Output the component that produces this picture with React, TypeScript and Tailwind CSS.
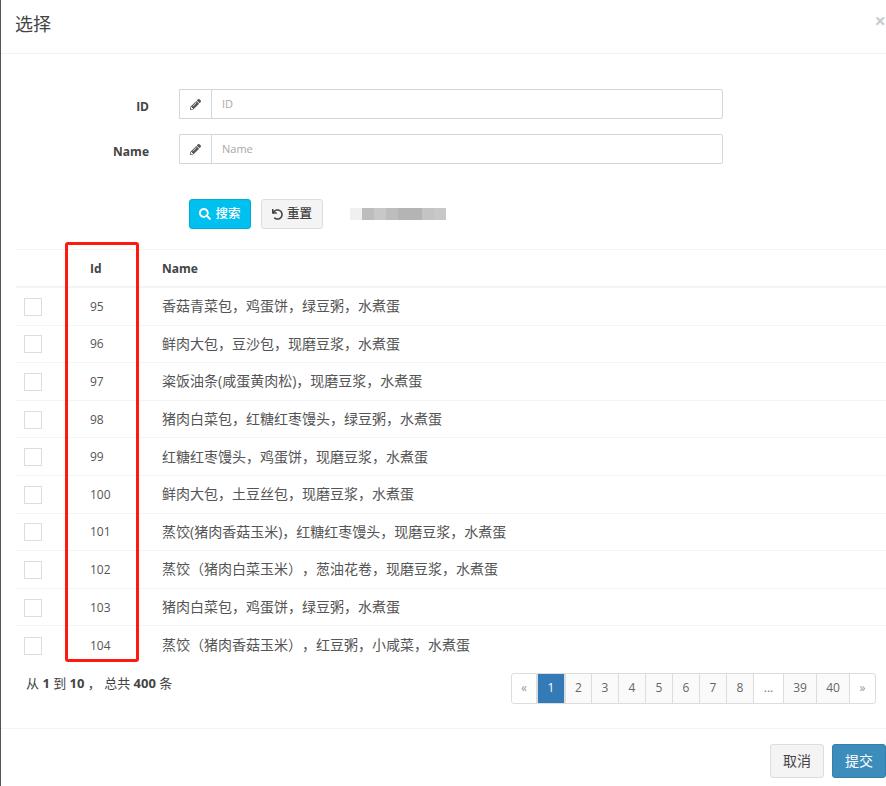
import React from "react";
import { FaPencilAlt, FaSearch, FaUndo } from "react-icons/fa";

const font = "font-['Open_Sans','Noto_Sans_CJK_SC',sans-serif]";

const rows: [string, string][] = [
  ["95", "香菇青菜包，鸡蛋饼，绿豆粥，水煮蛋"],
  ["96", "鲜肉大包，豆沙包，现磨豆浆，水煮蛋"],
  ["97", "粢饭油条(咸蛋黄肉松)，现磨豆浆，水煮蛋"],
  ["98", "猪肉白菜包，红糖红枣馒头，绿豆粥，水煮蛋"],
  ["99", "红糖红枣馒头，鸡蛋饼，现磨豆浆，水煮蛋"],
  ["100", "鲜肉大包，土豆丝包，现磨豆浆，水煮蛋"],
  ["101", "蒸饺(猪肉香菇玉米)，红糖红枣馒头，现磨豆浆，水煮蛋"],
  ["102", "蒸饺（猪肉白菜玉米），葱油花卷，现磨豆浆，水煮蛋"],
  ["103", "猪肉白菜包，鸡蛋饼，绿豆粥，水煮蛋"],
  ["104", "蒸饺（猪肉香菇玉米），红豆粥，小咸菜，水煮蛋"],
];

const pages: { t: string; w: string; cls?: string; flush?: boolean }[] = [
  { t: "«", w: "w-[26px]", cls: "bg-white text-[#999] rounded-l-[3px]" },
  { t: "1", w: "w-[28px]", flush: true, cls: "bg-[#337ab7] text-white border-[#337ab7]" },
  { t: "2", w: "w-[27px]", flush: true },
  { t: "3", w: "w-[28px]" },
  { t: "4", w: "w-[28px]" },
  { t: "5", w: "w-[28px]" },
  { t: "6", w: "w-[28px]" },
  { t: "7", w: "w-[28px]" },
  { t: "8", w: "w-[28px]" },
  { t: "...", w: "w-[31px]", cls: "bg-white text-[#777]" },
  { t: "39", w: "w-[34px]" },
  { t: "40", w: "w-[34px]" },
  { t: "»", w: "w-[27px]", cls: "bg-white text-[#999] rounded-r-[3px]" },
];

const blur: [string, string][] = [
  ["w-[12px]", "bg-[#f0f0f0]"],
  ["w-[12px]", "bg-[#bdbdbd]"],
  ["w-[12px]", "bg-[#c8c8c8]"],
  ["w-[12px]", "bg-[#bdbdbd]"],
  ["w-[24px]", "bg-[#b4b4b4]"],
  ["w-[12px]", "bg-[#c4c4c4]"],
  ["w-[12px]", "bg-[#c8c8c8]"],
];

function Field({ label, placeholder }: { label: string; placeholder: string }) {
  return (
    <div className="flex items-start h-[30px]">
      <div className="w-[148px] text-right text-[12px] font-bold text-[#444] pt-[9px] leading-[18px]">{label}</div>
      <div className="ml-[30px] w-[544px] h-[30px] flex border border-[#d2d6de] rounded-r-[2px] bg-white">
        <div className="w-[32px] shrink-0 flex items-center justify-center border-r border-[#d2d6de] text-[#555]">
          <FaPencilAlt className="text-[11px]" />
        </div>
        <div className="flex-1 pl-[10px] flex items-center text-[11px] text-[#a8a8a8]">{placeholder}</div>
      </div>
    </div>
  );
}

export default function App() {
  return (
    <div className={`relative w-[886px] h-[786px] overflow-hidden bg-white flex ${font}`}>
      <div className="w-[1px] shrink-0 bg-[#555]" />
      <div className="flex-1 min-w-0 flex flex-col">
        <div className="h-[54px] shrink-0 border-b border-[#f2f2f2] flex items-start justify-between pl-[14px]">
          <div className="text-[18px] leading-[25px] mt-[12px] text-[#444]">选择</div>
          <div className="text-[20px] font-bold leading-[20px] mt-[11px] text-[#ccc]">×</div>
        </div>

        <div className="mt-[35px] flex flex-col gap-[15px] shrink-0">
          <Field label="ID" placeholder="ID" />
          <Field label="Name" placeholder="Name" />
        </div>

        <div className="mt-[35px] ml-[188px] flex items-center h-[30px] shrink-0">
          <div className="w-[62px] h-[30px] flex items-center justify-center gap-[4px] rounded-[3px] bg-[#00c0ef] border border-[#00acd6] text-white text-[12.5px]">
            <FaSearch className="text-[12px]" />
            <span className="font-medium">搜索</span>
          </div>
          <div className="ml-[10px] w-[62px] h-[30px] flex items-center justify-center gap-[4px] rounded-[3px] bg-[#f4f4f4] border border-[#ddd] text-[#444] text-[12.5px]">
            <FaUndo className="text-[11px]" />
            <span className="font-medium">重置</span>
          </div>
          <div className="ml-[27px] flex h-[12px]">
            {blur.map(([w, c], i) => (
              <div key={i} className={`${w} ${c}`} />
            ))}
          </div>
        </div>

        <div className="mt-[20px] ml-[15px] shrink-0">
          <div className="h-[39px] pt-[1px] border-t border-[#f4f4f4] border-b-2 border-b-[#f4f4f4] flex items-center text-[12px] font-bold text-[#444]">
            <div className="w-[74px]" />
            <div className="w-[72px]">Id</div>
            <div>Name</div>
          </div>
          {rows.map(([id, name], i) => (
            <div key={id} className={`h-[37.6px] flex items-center text-[14px] text-[#555] ${i < 9 ? "border-b border-[#f4f4f4]" : ""}`}>
              <div className="w-[74px] pl-[8px] pt-[1px]">
                <div className="w-[18px] h-[18px] border border-[#ddd] bg-white" />
              </div>
              <div className="w-[72px] text-[12px] pt-[1px]">{id}</div>
              <div className="whitespace-nowrap pb-[1px] [text-spacing-trim:space-all]">{name}</div>
            </div>
          ))}
        </div>

        <div className="flex justify-between items-start ml-[25px] mr-[10px] mt-[9px] shrink-0">
          <div className="text-[13px] text-[#444] mt-[1px]">
            从 <b>1</b> 到 <b>10</b> ， 总共 <b>400</b> 条
          </div>
          <div className="flex h-[31px]">
            {pages.map((p, i) => (
              <div
                key={i}
                className={`${p.w} ${i > 0 && !p.flush ? "-ml-px" : ""} h-full flex items-center justify-center border border-[#ddd] text-[12px] ${p.cls ?? "bg-[#fafafa] text-[#666]"}`}
              >
                {p.t}
              </div>
            ))}
          </div>
        </div>

        <div className="mt-[24px] border-t border-[#f4f4f4] flex-1 flex justify-end gap-[8px] pt-[15px] items-start">
          <div className="w-[54px] h-[34px] flex items-center justify-center rounded-[3px] bg-[#f4f4f4] border border-[#ddd] text-[#444] text-[14px]">取消</div>
          <div className="w-[54px] h-[34px] flex items-center justify-center rounded-[3px] bg-[#3c8dbc] border border-[#367fa9] text-white text-[14px]">提交</div>
        </div>
      </div>

      <div className="absolute left-[65px] top-[242px] w-[74px] h-[420px] border-[3px] border-[#ff1a10] rounded-[3px] pointer-events-none" />
    </div>
  );
}
